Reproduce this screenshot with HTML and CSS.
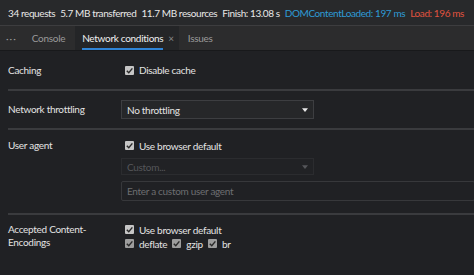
FILE: index.html
```html
<!DOCTYPE html>
<html>
<head>
<meta charset="utf-8">
<link rel="stylesheet" href="styles.css">
</head>
<body>
<div class="status">
  <span>34 requests</span>
  <span>5.7 MB transferred</span>
  <span>11.7 MB resources</span>
  <span>Finish: 13.08 s</span>
  <span class="dcl">DOMContentLoaded: 197 ms</span>
  <span class="load">Load: 196 ms</span>
</div>
<div class="tabs">
  <div class="tab more">···</div>
  <div class="tab">Console</div>
  <div class="tab active"><span class="tab-label">Network conditions</span><span class="close">×</span></div>
  <div class="tab">Issues</div>
</div>
<div class="content">
  <div class="row r1">
    <div class="label">Caching</div>
    <div class="ctrl">
      <label class="check"><span class="box"><svg viewBox="0 0 10 10"><path d="M2 5.2 L4.2 7.4 L8.2 2.6" /></svg></span>Disable cache</label>
    </div>
  </div>
  <div class="row r2">
    <div class="label">Network throttling</div>
    <div class="ctrl">
      <div class="select">No throttling<svg class="arrow" viewBox="0 0 8 5"><path d="M0 0 H8 L4 5 Z"/></svg></div>
    </div>
  </div>
  <div class="row r3">
    <div class="label">User agent</div>
    <div class="ctrl stack">
      <label class="check"><span class="box"><svg viewBox="0 0 10 10"><path d="M2 5.2 L4.2 7.4 L8.2 2.6" /></svg></span>Use browser default</label>
      <div class="select disabled">Custom...<svg class="arrow" viewBox="0 0 8 5"><path d="M0 0 H8 L4 5 Z"/></svg></div>
      <div class="input">Enter a custom user agent</div>
    </div>
  </div>
  <div class="row r4">
    <div class="label">Accepted Content-<br>Encodings</div>
    <div class="ctrl stack tight">
      <label class="check"><span class="box"><svg viewBox="0 0 10 10"><path d="M2 5.2 L4.2 7.4 L8.2 2.6" /></svg></span>Use browser default</label>
      <div class="inline">
        <label class="check dim"><span class="box"><svg viewBox="0 0 10 10"><path d="M2 5.2 L4.2 7.4 L8.2 2.6" /></svg></span>deflate</label>
        <label class="check dim"><span class="box"><svg viewBox="0 0 10 10"><path d="M2 5.2 L4.2 7.4 L8.2 2.6" /></svg></span>gzip</label>
        <label class="check dim"><span class="box"><svg viewBox="0 0 10 10"><path d="M2 5.2 L4.2 7.4 L8.2 2.6" /></svg></span>br</label>
      </div>
    </div>
  </div>
</div>
</body>
</html>
```
FILE: styles.css
```css
* { box-sizing: border-box; }
html, body { margin: 0; padding: 0; }
body {
  width: 474px;
  height: 275px;
  overflow: hidden;
  background: #202124;
  color: #e3e3e3;
  font-family: "Lato", "Noto Sans", sans-serif;
  font-size: 10px;
  letter-spacing: -0.3px;
}
.status {
  height: 26px;
  background: #28292b;
  border-bottom: 1px solid #3d3d3f;
  display: flex;
  align-items: center;
  gap: 5px;
  padding-left: 8px;
  white-space: nowrap;
  color: #e8e8e8;
  font-size: 10px;
  letter-spacing: -0.4px;
}
.status .dcl { color: #2e9bd6; }
.status .load { color: #e0533f; }
.tabs {
  height: 25px;
  background: #2c2c2d;
  display: flex;
  align-items: stretch;
  border-bottom: 1px solid #18191b;
}
.tab {
  display: flex;
  align-items: center;
  padding: 0 9px;
  color: #9a9a9a;
}
.tab.more { padding: 0 6px 0 6px; letter-spacing: 1px; color: #9a9a9a; }
.tab.active {
  background: #242527;
  color: #f0f0f0;
  padding: 0 5px 0 7px;
  margin-left: 1px;
}
.tab-label {
  height: 100%;
  display: flex;
  align-items: center;
  border-bottom: 2px solid #2f84d6;
  padding-top: 2px;
}
.close { color: #8a8a8a; margin-left: 5px; font-size: 10px; }
.content { padding: 0 0 0 8px; }
.row {
  display: flex;
  border-bottom: 2px solid #3a3b3e;
}
.r1 { height: 40px; align-items: center; }
.r2 { height: 39px; align-items: center; }
.r3 { height: 85px; padding-top: 9px; }
.r4 { border-bottom: none; padding-top: 8px; }
.label {
  width: 113px;
  flex: none;
  line-height: 13px;
  color: #e3e3e3;
}
.ctrl { flex: 1; display: flex; align-items: center; }
.ctrl.stack { flex-direction: column; align-items: stretch; }
.r3 .select { margin-top: 6px; }
.r3 .input { margin-top: 6px; }
.ctrl.tight .inline { margin-top: 1px; }
.check { display: flex; align-items: center; height: 13px; color: #e3e3e3; }
.box {
  width: 9px; height: 9px;
  background: #c6c6c6;
  border-radius: 1px;
  margin-left: 4px;
  margin-right: 5px;
  display: flex;
}
.box svg { width: 9px; height: 9px; }
.box path { fill: none; stroke: #2a2a2a; stroke-width: 1.6; }
.check.dim .box { background: #9d9d9d; }
.inline { display: flex; gap: 1px; }
.select {
  width: 193px;
  height: 19px;
  border: 1px solid #3d3e41;
  background: #262729;
  display: flex;
  align-items: center;
  padding-left: 5px;
  position: relative;
  color: #e3e3e3;
}
.select .arrow {
  position: absolute;
  right: 5px;
  top: 7px;
  width: 6px;
  height: 4px;
  fill: #e8e8e8;
}
.select.disabled { color: #55565a; border-color: #2b2c2f; background: #212225; height: 17px; }
.select.disabled .arrow { fill: #55565a; top: 6px; }
.input {
  height: 20px;
  margin-right: -1px;
  border: 1px solid #37383b;
  border-radius: 2px;
  display: flex;
  align-items: center;
  padding-left: 5px;
  color: #6d6e71;
}
```
